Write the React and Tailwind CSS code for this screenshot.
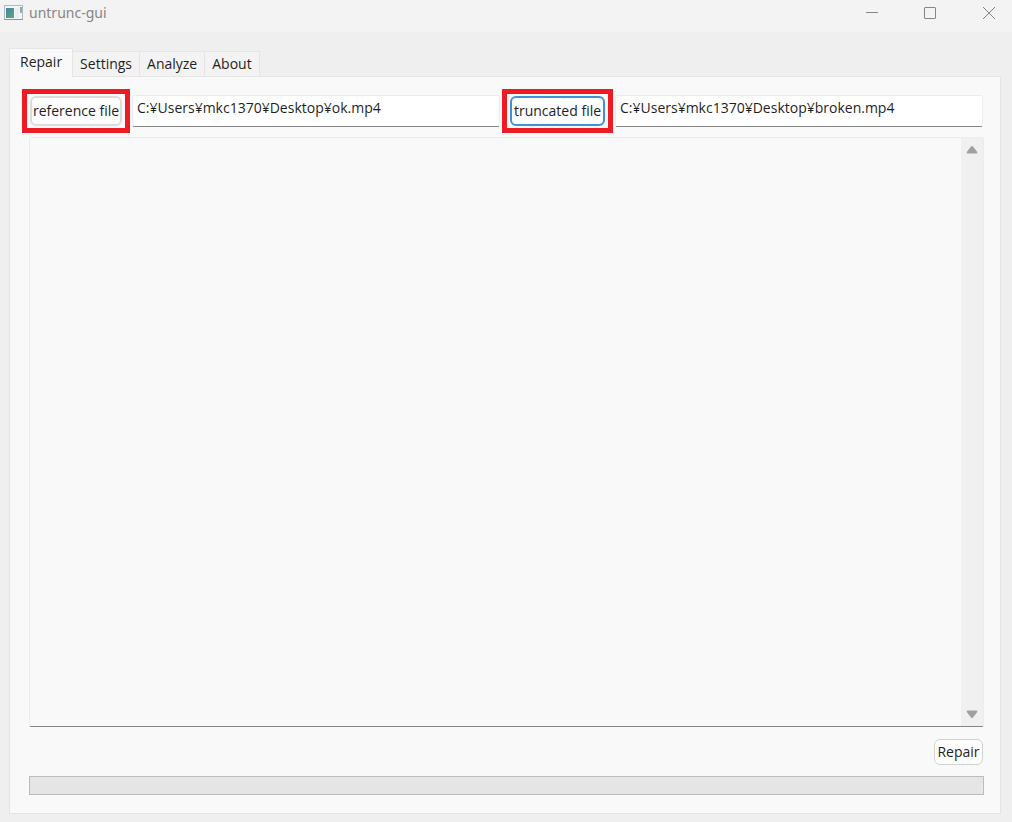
import React, { useState } from 'react';

const tabs = ['Repair', 'Settings', 'Analyze', 'About'];

const AppIcon = () => (
  <svg width="20" height="16" viewBox="0 0 20 16" aria-hidden="true">
    <defs>
      <linearGradient id="screen" x1="0" y1="0" x2="1" y2="1">
        <stop offset="0" stopColor="#4a80a8" />
        <stop offset="1" stopColor="#58aa7a" />
      </linearGradient>
    </defs>
    <rect x="0.5" y="0.5" width="18" height="14" fill="#f4f5f7" stroke="#b4b7be" />
    <path d="M0 14.5h19" stroke="#8e929b" />
    <rect x="2" y="3" width="8" height="10" fill="url(#screen)" />
    <rect x="11" y="3" width="4" height="10" fill="#eceef1" />
    <rect x="16" y="2" width="2" height="6" fill="url(#screen)" opacity="0.7" />
  </svg>
);

const WindowButton = ({ label, children }) => (
  <button aria-label={label} className="flex h-full w-[58px] items-center justify-center">
    <svg width="14" height="14" viewBox="0 0 14 14" fill="none" stroke="#868686">
      {children}
    </svg>
  </button>
);

const TitleBar = () => (
  <header className="flex h-8 items-center bg-[#f3f3f3] pl-1">
    <div className="flex h-full items-center gap-[5px] pb-1.5">
      <AppIcon />
      <h1 className="font-['Noto_Sans',sans-serif] text-[14px] leading-5 text-[#868686]">untrunc-gui</h1>
    </div>
    <div className="ml-auto -mr-1.5 flex h-full pb-1.5">
      <WindowButton label="Minimize">
        <path d="M0 6.5h12" />
      </WindowButton>
      <WindowButton label="Maximize">
        <rect x="0.5" y="1.5" width="11" height="11" rx="0.5" />
      </WindowButton>
      <WindowButton label="Close">
        <path d="M1 1l12 12M13 1L1 13" />
      </WindowButton>
    </div>
  </header>
);

// file picker button with the red marker around it
const FileButton = ({ focused, width, children }) => (
  <div className="relative flex items-center">
    <button
      className={`h-[30px] whitespace-nowrap rounded-md text-center ${width} ${
        focused ? 'border-2 border-[#3d93d6] bg-[#fbfdff]' : 'border-2 border-[#dcdcdc] bg-[#fdfdfd]'
      }`}
    >
      {children}
    </button>
    <span className="pointer-events-none absolute -inset-x-2 -inset-y-[7px] border-5 border-[#ed1c24]" />
  </div>
);

const PathInput = ({ label, value, onChange }) => (
  <input
    type="text"
    aria-label={label}
    value={value}
    onChange={e => onChange(e.target.value)}
    className="h-8 min-w-0 flex-1 rounded-xs border border-[#ececec] border-b-[#858585] bg-white px-1 pb-[7px] outline-none"
  />
);

const App = () => {
  const [activeTab, setActiveTab] = useState('Repair');
  const [okFile, setOkFile] = useState('C:¥Users¥mkc1370¥Desktop¥ok.mp4');
  const [brokenFile, setBrokenFile] = useState('C:¥Users¥mkc1370¥Desktop¥broken.mp4');

  return (
    <div className="flex min-h-screen flex-col bg-[#efefef] font-['Open_Sans','Noto_Sans_CJK_JP',sans-serif] text-[14px] leading-5 text-[#1f1f1f]">
      <TitleBar />

      <main className="flex flex-1 flex-col pt-4 pr-[11px] pb-2 pl-[9px]">
        <div role="tablist" className="flex items-end">
          {tabs.map(tab => (
            <button
              key={tab}
              role="tab"
              aria-selected={tab === activeTab}
              onClick={() => setActiveTab(tab)}
              className={
                tab === activeTab
                  ? 'relative z-10 -mb-px h-[29px] border border-b-0 border-[#e5e5e5] bg-[#f9f9f9] px-[10px] pb-0.5'
                  : 'h-[25px] border border-b-0 border-l-0 border-[#e5e5e5] bg-[#f3f3f3] px-[7px]'
              }
            >
              {tab}
            </button>
          ))}
        </div>

        <section role="tabpanel" className="flex flex-1 flex-col border border-[#e5e5e5] bg-[#f9f9f9] py-[18px] pr-4 pl-[19px]">
          <div className="flex items-center gap-[10px] px-px">
            <FileButton width="w-[92px]">reference file</FileButton>
            <PathInput label="reference file path" value={okFile} onChange={setOkFile} />
            <FileButton width="w-[95px]" focused>truncated file</FileButton>
            <PathInput label="truncated file path" value={brokenFile} onChange={setBrokenFile} />
          </div>

          <div className="mt-[10px] flex flex-1 rounded-xs border border-[#ececec] border-b-[#858585]">
            <textarea aria-label="Log" readOnly className="flex-1 resize-none p-1 outline-none" />
            <div className="flex w-[22px] flex-col items-center justify-between bg-[#f0f0f0] py-[7px]">
              <button aria-label="Scroll up">
                <svg width="12" height="9" viewBox="0 0 12 9" fill="#a0a0a0">
                  <path d="M5 1.4Q6 .4 7 1.4L11.3 7Q11.6 8.5 10.5 8.5h-9Q.4 8.5.7 7z" />
                </svg>
              </button>
              <button aria-label="Scroll down">
                <svg width="12" height="9" viewBox="0 0 12 9" fill="#a0a0a0">
                  <path d="M5 7.6Q6 8.6 7 7.6L11.3 2Q11.6.5 10.5.5h-9Q.4.5.7 2z" />
                </svg>
              </button>
            </div>
          </div>

          <button className="mt-3 mr-px h-[26px] w-[49px] self-end rounded-md border border-[#d2d2d2] bg-[#fdfdfd]">
            Repair
          </button>
          <progress
            aria-label="Repair progress"
            value={0}
            max={100}
            className="mt-[11px] h-[19px] w-full appearance-none border border-[#bcbcbc] bg-[#e5e5e5] [&::-webkit-progress-bar]:bg-[#e5e5e5]"
          />
        </section>
      </main>
    </div>
  );
};

export default App;
